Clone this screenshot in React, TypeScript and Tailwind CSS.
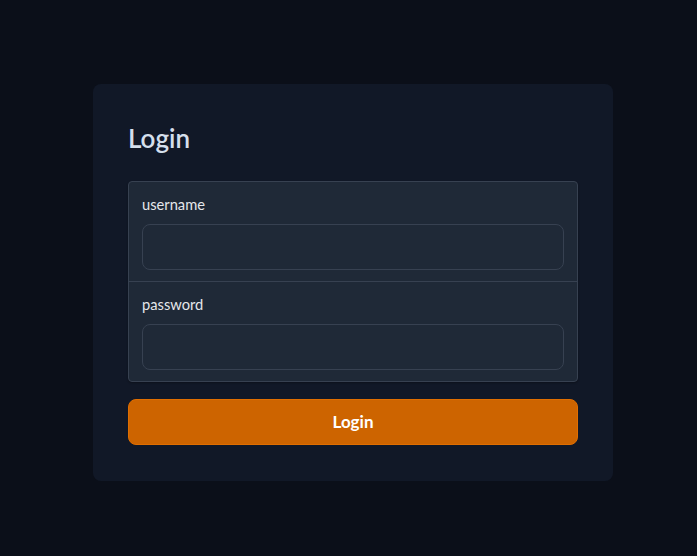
export default function App() {
  return (
    <div
      className="min-h-[556px] w-full bg-[#0b0f19] flex justify-center pt-[84px] pl-[9px]"
      style={{ fontFamily: '"Source Sans Pro", Lato, "Noto Sans", sans-serif' }}
    >
      <div className="w-[520px] h-[397px] bg-[#111827] rounded-lg pt-[36px] px-[35px]">
        <h1 className="text-[26px] leading-[36px] font-semibold text-[#d5dfec] mb-[25px]">Login</h1>
        <div className="border border-[#374151] rounded-[4px] bg-[#1f2937] shadow-[0_1px_2px_rgba(0,0,0,0.3)]">
          <div className="px-[13px] pt-[12px] pb-[11px] border-b border-[#374151]">
            <div className="text-[14.7px] leading-[20px] text-[#e5e7eb] mb-[10px]">username</div>
            <input className="block w-full h-[46px] rounded-[8px] border border-[#374151] bg-[#1f2937] outline-none" />
          </div>
          <div className="px-[13px] pt-[12px] pb-[11px]">
            <div className="text-[14.7px] leading-[20px] text-[#e5e7eb] mb-[10px]">password</div>
            <input type="password" className="block w-full h-[46px] rounded-[8px] border border-[#374151] bg-[#1f2937] outline-none" />
          </div>
        </div>
        <button className="mt-[17px] w-full h-[46px] rounded-[8px] bg-[#cd6400] border border-[#e06e00] text-white text-[17px] font-bold">
          Login
        </button>
      </div>
    </div>
  );
}
